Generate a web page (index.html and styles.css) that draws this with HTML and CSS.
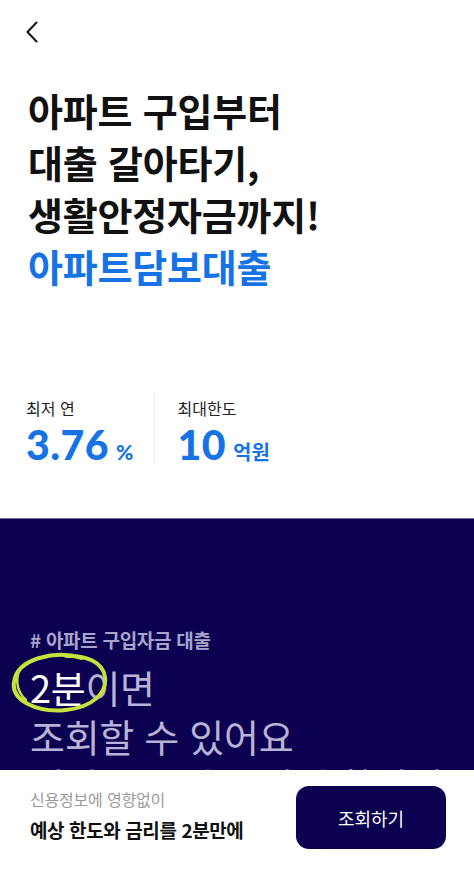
FILE: index.html
```html
<!DOCTYPE html>
<html lang="ko">
<head>
<meta charset="utf-8">
<link rel="stylesheet" href="styles.css">
</head>
<body>
<header class="topbar">
  <button class="back" aria-label="뒤로">
    <svg width="14" height="22" viewBox="0 0 14 22"><path d="M11.5 1.5 L2.5 11 L11.5 20.5" fill="none" stroke="#111" stroke-width="2" stroke-linecap="round" stroke-linejoin="round"/></svg>
  </button>
</header>
<section class="hero">
  <h1 class="title">아파트 구입부터<br>대출 갈아타기,<br>생활안정자금까지!<br><span class="blue">아파트담보대출</span></h1>
</section>
<section class="stats">
  <div class="stat">
    <div class="label">최저 연</div>
    <div class="value"><span class="num">3.76</span><span class="unit pct">%</span></div>
  </div>
  <div class="divider"></div>
  <div class="stat">
    <div class="label">최대한도</div>
    <div class="value"><span class="num">10</span><span class="unit">억원</span></div>
  </div>
</section>
<section class="dark">
  <div class="tag"># 아파트 구입자금 대출</div>
  <p class="big"><span class="hl">2분<svg class="circle" width="100" height="64" viewBox="0 0 100 64"><path d="M72 6 C46 -2 7 6 4 30 C1 49 28 61 56 58 C83 55 97 41 95 25 C93 10 76 3 56 4" fill="none" stroke="#c5e33c" stroke-width="4" stroke-linecap="round"/><path d="M12 15 C5 23 5 38 16 48" fill="none" stroke="#c5e33c" stroke-width="2.5" stroke-linecap="round"/></svg></span>이면<br>조회할 수 있어요<br>원하는 조건 한번에 확인해요</p>
</section>
<footer class="bottombar">
  <div class="bb-text">
    <div class="bb-sub">신용정보에 영향없이</div>
    <div class="bb-main">예상 한도와 금리를 2분만에</div>
  </div>
  <button class="cta">조회하기</button>
</footer>
</body>
</html>
```
FILE: styles.css
```css
* { box-sizing: border-box; }
html, body { margin: 0; padding: 0; }
body {
  width: 474px;
  font-family: "Noto Sans CJK KR", "Noto Sans", sans-serif;
  background: #fff;
  color: #111;
  overflow: hidden;
  height: 879px;
}
.topbar {
  height: 66px;
  padding: 20px 0 0 24px;
}
.back {
  border: 0;
  background: none;
  padding: 0;
  width: 16px;
  height: 24px;
  display: flex;
  align-items: center;
  justify-content: center;
}
.hero {
  padding: 18px 20px 0 28px;
}
.title {
  margin: 0;
  font-size: 38px;
  line-height: 52px;
  font-weight: 700;
  letter-spacing: -0.2px;
  color: #111;
}
.blue { color: #1673e6; }
.stats {
  display: flex;
  align-items: flex-start;
  padding: 106px 0 0 26px;
}
.stat { display: flex; flex-direction: column; }
.label {
  font-size: 16px;
  line-height: 20px;
  color: #222;
}
.value {
  display: flex;
  align-items: baseline;
  margin-top: 4px;
  color: #1673e6;
}
.num {
  font-family: "Lato", sans-serif;
  font-weight: 900;
  font-size: 41px;
  line-height: 46px;
  letter-spacing: 0.5px;
}
.unit {
  font-size: 20px;
  font-weight: 700;
  margin-left: 7px;
}
.pct { font-family: "Lato", sans-serif; font-weight: 900; font-size: 21px; }
.divider {
  width: 1px;
  background: #ececec;
  margin: -6px 22px 0 21px;
  height: 72px;
}
.dark {
  margin-top: 50px;
  background: #0c0050;
  border-top: 1px solid #6c6a98;
  padding: 107px 30px 0 30px;
  height: 420px;
}
.tag {
  font-size: 19px;
  font-weight: 700;
  color: #a8a4cc;
  line-height: 28px;
  letter-spacing: -0.3px;
}
.big {
  margin: 8px 0 0 0;
  font-size: 38px;
  line-height: 49px;
  font-weight: 400;
  color: #b7b3d6;
  letter-spacing: -0.3px;
}
.hl {
  position: relative;
  color: #fff;
}
.circle {
  position: absolute;
  left: -20px;
  top: -7px;
}
.bottombar {
  position: fixed;
  left: 0;
  bottom: 0;
  width: 474px;
  height: 109px;
  background: #fff;
  display: flex;
  align-items: flex-start;
  justify-content: space-between;
  padding: 16px 28px 0 30px;
}
.bb-text { padding-top: 2px; }
.bb-sub {
  font-size: 16px;
  line-height: 22px;
  color: #9a9a9a;
  letter-spacing: -0.2px;
}
.bb-main {
  margin-top: 7px;
  font-size: 19px;
  line-height: 26px;
  font-weight: 700;
  color: #111;
  letter-spacing: -0.4px;
}
.cta {
  width: 150px;
  height: 63px;
  border: 0;
  border-radius: 13px;
  background: #0c0050;
  color: #fff;
  font-family: "Noto Sans CJK KR", sans-serif;
  font-size: 18px;
  font-weight: 400;
}
```
